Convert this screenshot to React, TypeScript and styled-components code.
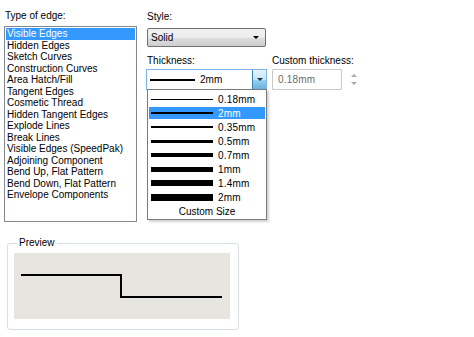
import React from "react";
import styled, { createGlobalStyle } from "styled-components";

const Global = createGlobalStyle`
  html, body { margin: 0; padding: 0; background: #ffffff; }
  body { font-family: "Liberation Sans", Arial, sans-serif; font-size: 10px; color: #000; }
`;

const Page = styled.div`
  width: 474px;
  height: 337px;
  box-sizing: border-box;
  padding: 10px 0 0 4px;
  display: flex;
  flex-direction: column;
`;

const Top = styled.div`
  display: grid;
  grid-template-columns: 133px auto;
  column-gap: 9px;
  align-items: start;
`;

const Column = styled.div<{ $pt?: number }>`
  display: flex;
  flex-direction: column;
  padding-top: ${(p) => p.$pt ?? 0}px;
`;

const Label = styled.div<{ $mt?: number; $ml?: number }>`
  line-height: 12px;
  height: 12px;
  white-space: nowrap;
  margin-top: ${(p) => p.$mt ?? 0}px;
  margin-left: ${(p) => p.$ml ?? 1}px;
`;

const ListBox = styled.div`
  margin-top: 4px;
  width: 133px;
  height: 196px;
  box-sizing: border-box;
  border: 1px solid #828790;
  padding: 1px;
  background: #fff;
`;

const ListItem = styled.div<{ $sel?: boolean }>`
  line-height: 11.5px;
  height: 11.5px;
  padding-left: 1px;
  white-space: nowrap;
  background: ${(p) => (p.$sel ? "#3399ff" : "transparent")};
  color: ${(p) => (p.$sel ? "#ffffff" : "#000")};
`;

const ComboBase = styled.div<{ $w: number; $h: number; $ml?: number; $mt?: number }>`
  position: relative;
  box-sizing: border-box;
  width: ${(p) => p.$w}px;
  height: ${(p) => p.$h}px;
  margin-left: ${(p) => p.$ml ?? 0}px;
  margin-top: ${(p) => p.$mt ?? 0}px;
  display: flex;
  align-items: center;
`;

const StyleCombo = styled(ComboBase)`
  border: 1px solid #707070;
  border-radius: 2px;
  background: linear-gradient(#f2f2f2 0%, #ebebeb 50%, #dddddd 51%, #cfcfcf 100%);
  padding: 0 6px 0 3px;
  justify-content: space-between;
`;

const Arrow = styled.span<{ $c?: string }>`
  width: 0;
  height: 0;
  border-left: 3px solid transparent;
  border-right: 3px solid transparent;
  border-top: 3px solid ${(p) => p.$c ?? "#000"};
`;

const ThickCombo = styled(ComboBase)`
  border: 1px solid #7eb4ea;
  background: #fff;
  padding-left: 3px;
`;

const LineSample = styled.span<{ $w: number; $t: number }>`
  display: inline-block;
  width: ${(p) => p.$w}px;
  height: ${(p) => p.$t}px;
  background: #000;
  flex: none;
`;

const ComboText = styled.span`
  margin-left: 5px;
`;

const DropButton = styled.div`
  position: absolute;
  right: 0;
  top: 0;
  bottom: 0;
  width: 14px;
  box-sizing: border-box;
  border-left: 1px solid #3c7fb1;
  background: linear-gradient(#e5f4fc 0%, #c4e5f6 50%, #98d1ef 51%, #68b3db 100%);
  display: flex;
  align-items: center;
  justify-content: center;
`;

const DropList = styled.div`
  position: absolute;
  top: 100%;
  left: 0;
  width: 120px;
  box-sizing: border-box;
  border: 1px solid #7a7a7a;
  background: #fff;
  padding: 2px 0 1px;
  box-shadow: 2px 2px 2px rgba(0, 0, 0, 0.18);
  z-index: 2;
  display: flex;
  flex-direction: column;
`;

const DropRow = styled.div<{ $sel?: boolean; $center?: boolean }>`
  height: 12px;
  margin: 1px 1px;
  box-sizing: border-box;
  display: flex;
  align-items: center;
  justify-content: ${(p) => (p.$center ? "center" : "flex-start")};
  padding-left: ${(p) => (p.$center ? 0 : 2)}px;
  background: ${(p) => (p.$sel ? "#3399ff" : "transparent")};
  color: ${(p) => (p.$sel ? "#fff" : "#000")};
  white-space: nowrap;
`;

const SampleLine = styled.span<{ $t: number }>`
  display: inline-block;
  width: 62px;
  height: ${(p) => p.$t}px;
  background: #000;
  flex: none;
`;

const RowText = styled.span`
  margin-left: 5px;
  letter-spacing: 0.2px;
`;

const FieldsRow = styled.div`
  display: grid;
  grid-template-columns: 121px auto;
  column-gap: 4px;
  margin-top: 8px;
`;

const Field = styled.div`
  position: relative;
  display: flex;
  flex-direction: column;
`;

const SpinWrap = styled.div`
  display: flex;
  align-items: stretch;
  margin-top: 2px;
  margin-left: 1px;
`;

const TextInput = styled.div`
  width: 70px;
  height: 21px;
  box-sizing: border-box;
  border: 1px solid #c9c9c9;
  border-radius: 1px;
  color: #6d6d6d;
  display: flex;
  align-items: center;
  padding-left: 5px;
  letter-spacing: 0.2px;
`;

const Spinner = styled.div`
  width: 13px;
  margin-left: 5px;
  display: flex;
  flex-direction: column;
  align-items: center;
  justify-content: center;
  gap: 5px;
`;

const UpArrow = styled.span`
  width: 0;
  height: 0;
  border-left: 3px solid transparent;
  border-right: 3px solid transparent;
  border-bottom: 3px solid #a8a8a8;
`;

const Group = styled.fieldset`
  margin: 15px 0 0 3px;
  padding: 4px 8px 10px 6px;
  width: 232px;
  box-sizing: border-box;
  border: 1px solid #d5dfe5;
  border-radius: 3px;
  min-width: 0;
`;

const Legend = styled.legend`
  padding: 0 2px;
  margin-left: 3px;
  line-height: 12px;
  color: #000;
`;

const PreviewArea = styled.div`
  width: 216px;
  height: 66px;
  background: #e6e5e0;
`;

const edgeTypes = [
  "Visible Edges",
  "Hidden Edges",
  "Sketch Curves",
  "Construction Curves",
  "Area Hatch/Fill",
  "Tangent Edges",
  "Cosmetic Thread",
  "Hidden Tangent Edges",
  "Explode Lines",
  "Break Lines",
  "Visible Edges (SpeedPak)",
  "Adjoining Component",
  "Bend Up, Flat Pattern",
  "Bend Down, Flat Pattern",
  "Envelope Components",
];

const thicknesses: { label: string; t: number; sel?: boolean }[] = [
  { label: "0.18mm", t: 1 },
  { label: "2mm", t: 2, sel: true },
  { label: "0.35mm", t: 2 },
  { label: "0.5mm", t: 3 },
  { label: "0.7mm", t: 4 },
  { label: "1mm", t: 5 },
  { label: "1.4mm", t: 6 },
  { label: "2mm", t: 7 },
];

export default function App() {
  return (
    <>
      <Global />
      <Page>
        <Top>
          <Column>
            <Label>Type of edge:</Label>
            <ListBox>
              {edgeTypes.map((e, i) => (
                <ListItem key={e} $sel={i === 0}>
                  {e}
                </ListItem>
              ))}
            </ListBox>
          </Column>
          <Column $pt={1}>
            <Label>Style:</Label>
            <StyleCombo $w={119} $h={19} $ml={1} $mt={5}>
              <span>Solid</span>
              <Arrow />
            </StyleCombo>
            <FieldsRow>
              <Field>
                <Label>Thickness:</Label>
                <ThickCombo $w={121} $h={21} $mt={2}>
                  <LineSample $w={45} $t={2} />
                  <ComboText>2mm</ComboText>
                  <DropButton>
                    <Arrow $c="#1a2e44" />
                  </DropButton>
                  <DropList>
                    {thicknesses.map((r, i) => (
                      <DropRow key={i} $sel={r.sel}>
                        <SampleLine $t={r.t} />
                        <RowText>{r.label}</RowText>
                      </DropRow>
                    ))}
                    <DropRow $center>Custom Size</DropRow>
                  </DropList>
                </ThickCombo>
              </Field>
              <Field>
                <Label>Custom thickness:</Label>
                <SpinWrap>
                  <TextInput>0.18mm</TextInput>
                  <Spinner>
                    <UpArrow />
                    <Arrow $c="#a8a8a8" />
                  </Spinner>
                </SpinWrap>
              </Field>
            </FieldsRow>
          </Column>
        </Top>
        <Group>
          <Legend>Preview</Legend>
          <PreviewArea>
            <svg width="216" height="66" viewBox="0 0 216 66">
              <path d="M7 22 H107 V44 H208" fill="none" stroke="#000" strokeWidth="2" />
            </svg>
          </PreviewArea>
        </Group>
      </Page>
    </>
  );
}
